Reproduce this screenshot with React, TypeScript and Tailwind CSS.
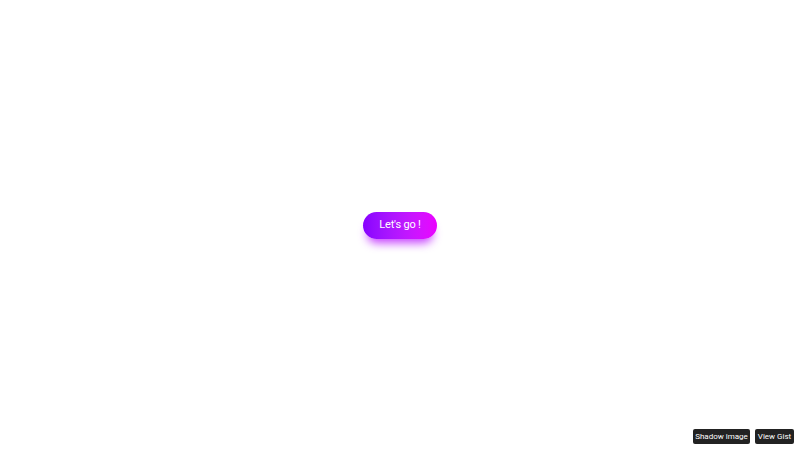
export default function App() {
  return (
    <div className="relative w-[800px] h-[450px] bg-white flex items-center justify-center" style={{ fontFamily: "Roboto, 'Liberation Sans', sans-serif" }}>
      <button className="h-[27px] w-[74px] rounded-full bg-gradient-to-r from-[#8800ff] to-[#ea00ff] text-white text-[11px] tracking-[-0.2px] flex items-center justify-center shadow-[0_8px_10px_-4px_rgba(180,0,255,0.75)]">
        Let's go !
      </button>
      <div className="absolute right-[6px] bottom-[6px] flex gap-[5px]">
        <span className="h-[15px] w-[57px] rounded-[2px] bg-[#222] text-white text-[8px] leading-[15px] text-center">Shadow image</span>
        <span className="h-[15px] w-[39px] rounded-[2px] bg-[#222] text-white text-[8px] leading-[15px] text-center">View Gist</span>
      </div>
    </div>
  );
}
